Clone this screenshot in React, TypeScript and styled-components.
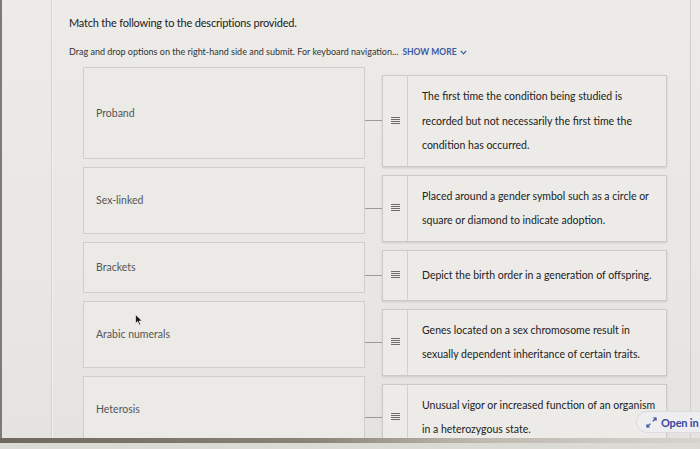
import React from 'react'
import styled, { createGlobalStyle } from 'styled-components'

const GlobalStyle = createGlobalStyle`
  html, body {
    margin: 0;
    padding: 0;
    background: #e7e6e2;
    overflow: hidden;
  }
  * { box-sizing: border-box; }
`

const Screen = styled.div`
  width: 700px;
  height: 449px;
  display: flex;
  flex-direction: column;
  overflow: hidden;
  position: relative;
  font-family: Lato, "Open Sans", sans-serif;
  background: linear-gradient(180deg, #ecebe8 0%, #e8e7e3 60%, #e4e3df 100%);
`

const Display = styled.div`
  flex: 1;
  display: flex;
  min-height: 0;
  border-left: 2px solid #7c7b78;
`

const Gutter = styled.div`
  width: 50px;
  flex: none;
  border-right: 1px solid #d3d2ce;
  box-shadow: 1px 0 0 #f3f2ef;
`

const Panel = styled.main`
  flex: 1;
  min-width: 0;
  padding: 15px 0 0 17px;
  border-right: 1px solid #cfceca;
  overflow: hidden;
`

const SideGutter = styled.div`
  width: 9px;
  flex: none;
`

const Bezel = styled.div`
  height: 11px;
  flex: none;
  display: flex;
  flex-direction: column;
  > .edge {
    height: 5px;
    background: linear-gradient(90deg, #6e685f 0%, #8a8378 45%, #bdb8af 68%, #d6d4cf 100%);
  }
  > .floor {
    flex: 1;
    background: #dcdad5;
  }
`

const Title = styled.h1`
  margin: 0;
  font-size: 11px;
  line-height: 16px;
  font-weight: 400;
  letter-spacing: -0.2px;
  color: #222;
`

const Instructions = styled.p`
  margin: 14px 0 0;
  font-size: 9px;
  line-height: 14px;
  color: #333;
  display: flex;
  align-items: center;
  gap: 4px;
`

const ShowMore = styled.span`
  display: inline-flex;
  align-items: center;
  gap: 3px;
  color: #3b5aa6;
  font-weight: 700;
  font-size: 8.5px;
`

const List = styled.div`
  margin: 8px 0 0 14px;
  display: flex;
  flex-direction: column;
  gap: 8px;
`

const Row = styled.div`
  display: grid;
  grid-template-columns: 282px 302px;
`

const Term = styled.div`
  border: 1px solid #cfcecb;
  background: #ebeae7;
  display: flex;
  align-items: center;
  padding-left: 12px;
  font-size: 10.5px;
  color: #555;
`

const Match = styled.div`
  margin: 8px 0 -8px;
  display: flex;
  align-items: center;
`

const Connector = styled.span`
  width: 17px;
  height: 1px;
  background: #9c9b98;
  flex: none;
`

const Card = styled.div`
  flex: 1;
  align-self: stretch;
  display: flex;
  border: 1px solid #cbcac6;
  background: #ecebe8;
  box-shadow: 0 1px 2px rgba(0, 0, 0, 0.12);
`

const Handle = styled.div`
  width: 25px;
  flex: none;
  border-right: 1px solid #d2d1cd;
  display: flex;
  align-items: center;
  justify-content: center;
  color: #6f6e6b;
`

const Description = styled.div`
  flex: 1;
  min-height: 49px;
  padding: 8px 6px 8px 14px;
  display: flex;
  align-items: center;
  font-size: 10.5px;
  line-height: 24.5px;
  color: #222;
  white-space: nowrap;
`

const OpenButton = styled.div`
  position: absolute;
  left: 636px;
  top: 411px;
  height: 22px;
  padding: 0 14px 0 9px;
  border-radius: 11px;
  background: #eeeef0;
  border: 1px solid #dcdcdf;
  display: flex;
  align-items: center;
  gap: 4px;
  white-space: nowrap;
  color: #3548a0;
  font-size: 11px;
  font-weight: 700;
  letter-spacing: -0.2px;
`

const Cursor = styled.svg`
  position: absolute;
  left: 135px;
  top: 314px;
`

const GripIcon = () => (
  <svg width="9" height="8" viewBox="0 0 9 8">
    <g stroke="currentColor" strokeWidth="1">
      <line x1="0" y1="0.5" x2="9" y2="0.5" />
      <line x1="0" y1="2.5" x2="9" y2="2.5" />
      <line x1="0" y1="4.5" x2="9" y2="4.5" />
      <line x1="0" y1="6.5" x2="9" y2="6.5" />
    </g>
  </svg>
)

const pairs = [
  {
    term: 'Proband',
    text: [
      'The first time the condition being studied is',
      'recorded but not necessarily the first time the',
      'condition has occurred.',
    ],
  },
  {
    term: 'Sex-linked',
    text: [
      'Placed around a gender symbol such as a circle or',
      'square or diamond to indicate adoption.',
    ],
  },
  { term: 'Brackets', text: ['Depict the birth order in a generation of offspring.'] },
  {
    term: 'Arabic numerals',
    text: [
      'Genes located on a sex chromosome result in',
      'sexually dependent inheritance of certain traits.',
    ],
  },
  {
    term: 'Heterosis',
    text: ['Unusual vigor or increased function of an organism', 'in a heterozygous state.'],
  },
]

export default function App() {
  return (
    <Screen>
      <GlobalStyle />
      <Display>
        <Gutter />
        <Panel>
          <Title>Match the following to the descriptions provided.</Title>
          <Instructions>
            Drag and drop options on the right-hand side and submit. For keyboard navigation...
            <ShowMore>
              SHOW MORE
              <svg width="7" height="5" viewBox="0 0 7 5">
                <path d="M0.8 0.8 L3.5 3.8 L6.2 0.8" fill="none" stroke="currentColor" strokeWidth="1.2" />
              </svg>
            </ShowMore>
          </Instructions>
          <List>
            {pairs.map(p => (
              <Row key={p.term}>
                <Term>{p.term}</Term>
                <Match>
                  <Connector />
                  <Card>
                    <Handle>
                      <GripIcon />
                    </Handle>
                    <Description>
                      <div>
                        {p.text.map(line => (
                          <div key={line}>{line}</div>
                        ))}
                      </div>
                    </Description>
                  </Card>
                </Match>
              </Row>
            ))}
          </List>
        </Panel>
        <SideGutter />
      </Display>
      <Bezel>
        <div className="edge" />
        <div className="floor" />
      </Bezel>
      <Cursor width="8" height="12" viewBox="0 0 8 12">
        <path d="M0.5 0.5 L0.5 9.5 L2.7 7.5 L4.2 11 L5.6 10.4 L4.2 7 L7.2 7 Z" fill="#1b1b1b" stroke="#f4f4f4" strokeWidth="0.7" />
      </Cursor>
      <OpenButton>
        <svg width="11" height="11" viewBox="0 0 11 11">
          <g stroke="#3548a0" strokeWidth="1.2" fill="none">
            <path d="M1 10 L4.3 6.7" />
            <path d="M1 7.2 L1 10 L3.8 10" />
            <path d="M10 1 L6.7 4.3" />
            <path d="M7.2 1 L10 1 L10 3.8" />
          </g>
        </svg>
        Open in Player
      </OpenButton>
    </Screen>
  )
}
